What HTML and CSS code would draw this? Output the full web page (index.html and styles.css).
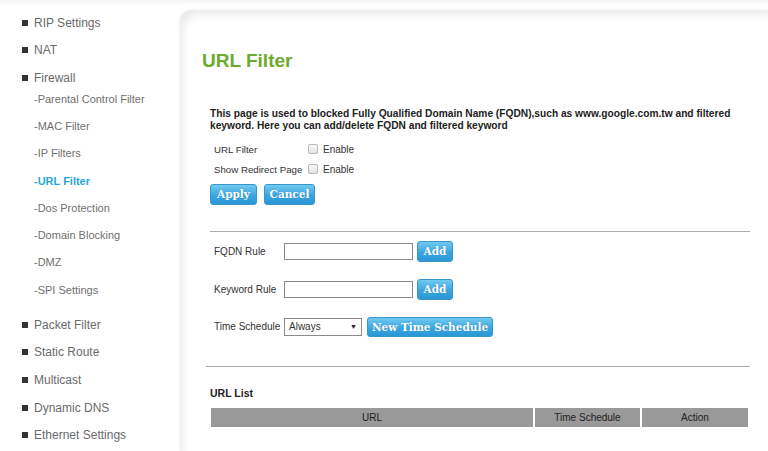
FILE: index.html
```html
<!DOCTYPE html>
<html>
<head>
<meta charset="utf-8">
<link rel="stylesheet" href="styles.css">
</head>
<body>
<div class="page">
  <nav class="sidebar">
    <ul class="menu">
      <li class="item"><span class="bullet"></span>RIP Settings</li>
      <li class="item"><span class="bullet"></span>NAT</li>
      <li class="item group"><span class="bullet"></span>Firewall
        <ul class="sub">
          <li>-Parental Control Filter</li>
          <li>-MAC Filter</li>
          <li>-IP Filters</li>
          <li class="active">-URL Filter</li>
          <li>-Dos Protection</li>
          <li>-Domain Blocking</li>
          <li>-DMZ</li>
          <li>-SPI Settings</li>
        </ul>
      </li>
      <li class="item"><span class="bullet"></span>Packet Filter</li>
      <li class="item"><span class="bullet"></span>Static Route</li>
      <li class="item"><span class="bullet"></span>Multicast</li>
      <li class="item"><span class="bullet"></span>Dynamic DNS</li>
      <li class="item"><span class="bullet"></span>Ethernet Settings</li>
    </ul>
  </nav>
  <main class="panel">
    <h1 class="title">URL Filter</h1>
    <div class="content">
      <p class="desc">This page is used to blocked Fully Qualified Domain Name (FQDN),such as www.google.com.tw and filtered keyword. Here you can add/delete FQDN and filtered keyword</p>
      <div class="checks">
        <div class="crow"><span class="clabel">URL Filter</span><span class="cbox"></span><span class="ctext">Enable</span></div>
        <div class="crow"><span class="clabel">Show Redirect Page</span><span class="cbox"></span><span class="ctext">Enable</span></div>
      </div>
      <div class="btns">
        <button class="btn">Apply</button>
        <button class="btn">Cancel</button>
      </div>
      <hr class="rule first">
      <div class="frow r1"><span class="flabel">FQDN Rule</span><span class="input"></span><button class="btn add">Add</button></div>
      <div class="frow r2"><span class="flabel">Keyword Rule</span><span class="input"></span><button class="btn add">Add</button></div>
      <div class="frow r3"><span class="flabel">Time Schedule</span><span class="select"><span>Always</span><span class="arrow">▼</span></span><button class="btn wide">New Time Schedule</button></div>
      <hr class="rule second">
      <div class="listtitle">URL List</div>
      <div class="table">
        <div class="th url">URL</div>
        <div class="th ts">Time Schedule</div>
        <div class="th act">Action</div>
      </div>
    </div>
  </main>
</div>
</body>
</html>
```
FILE: styles.css
```css
* { box-sizing: border-box; }
html, body { margin: 0; padding: 0; background: #fff; }
body { font-family: "Liberation Sans", Arial, sans-serif; width: 768px; height: 451px; overflow: hidden; }

.page { display: flex; height: 451px; background: linear-gradient(#f3f3f3, #fff 6px); }

.sidebar { width: 180px; flex: none; padding-top: 15.5px; }
.menu { list-style: none; margin: 0; padding: 0 0 0 22px; }
.item { font-size: 12px; line-height: 14px; color: #6a6a6a; padding-bottom: 13.6px; display: block; }
.bullet { display: inline-block; width: 6px; height: 6px; background: #333; margin-right: 6px; vertical-align: 1px; }
.group { padding-bottom: 0; }
.sub { list-style: none; margin: 7px 0 7.8px -10px; padding: 0 0 0 22px; }
.sub li { font-size: 11px; line-height: 14px; padding-bottom: 13.3px; color: #707070; }
.sub li.active { color: #2aa8dc; font-weight: bold; }

.panel { flex: 1; margin-top: 10px; background: #fff; border-top-left-radius: 12px;
  box-shadow: inset 8px 10px 10px -6px rgba(0,0,0,0.09), -1px -1px 3px rgba(0,0,0,0.04); }
.title { margin: 40px 0 0 22px; font-size: 19px; line-height: 22px; font-weight: bold; color: #6cab2c; }
.content { padding: 0 18px 0 30px; }
.desc { margin: 36px 0 0; font-size: 10.2px; line-height: 12px; font-weight: bold; color: #222; }

.checks { margin-top: 7px; }
.crow { display: flex; align-items: center; height: 20px; padding-left: 4px; font-size: 9.7px; color: #333; }
.clabel { width: 93px; }
.cbox { width: 10px; height: 10px; border: 1px solid #b8b8b8; border-radius: 2px; background: linear-gradient(#fafafa, #e2e2e2); margin: 0 5px 0 1px; }
.ctext { font-size: 10px; }

.btns { display: flex; gap: 7px; margin-top: 5px; }
.btn { font-family: "DejaVu Serif", "Liberation Serif", serif; font-weight: bold; font-size: 10.5px; color: #fff;
  border: 1px solid #3796cc; border-radius: 3px; background: linear-gradient(#72c9f0, #3aa6e0 55%, #2a97d6);
  height: 21px; padding: 0; line-height: 19px; text-shadow: 0 0 1px rgba(0,0,0,0.2); }
.btns .btn:first-child { width: 47px; }
.btns .btn:last-child { width: 51px; }

.rule { border: 0; height: 1px; background: #aaa; margin: 0; }
.rule.first { margin-top: 26px; }
.rule.second { margin: 29px 0 0 -4px; }

.frow { display: flex; align-items: center; padding-left: 4px; font-size: 10px; color: #333; }
.flabel { width: 70px; }
.r1 { margin-top: 8px; height: 22px; }
.r2 { margin-top: 16px; height: 22px; }
.r3 { margin-top: 16px; height: 21px; }
.input { width: 129px; height: 17px; border: 1px solid #8a8a8a; background: #fff; margin-right: 4px; }
.add { width: 36px; }
.select { width: 78px; height: 18px; border: 1px solid #8a8a8a; display: flex; justify-content: space-between; align-items: center; padding: 0 4px; font-size: 10px; margin-right: 5px; }
.arrow { font-size: 7px; color: #222; }
.wide { width: 126px; height: 20px; line-height: 18px; padding: 0; }

.listtitle { margin-top: 19px; font-size: 10.5px; font-weight: bold; color: #222; line-height: 14px; }
.table { display: flex; margin: 8px 2px 0 1px; gap: 2px; }
.th { background: #999; color: #222; font-size: 10px; height: 19px; line-height: 19px; text-align: center; }
.url { flex: 322; }
.ts { flex: 105; }
.act { flex: 106; }
```
